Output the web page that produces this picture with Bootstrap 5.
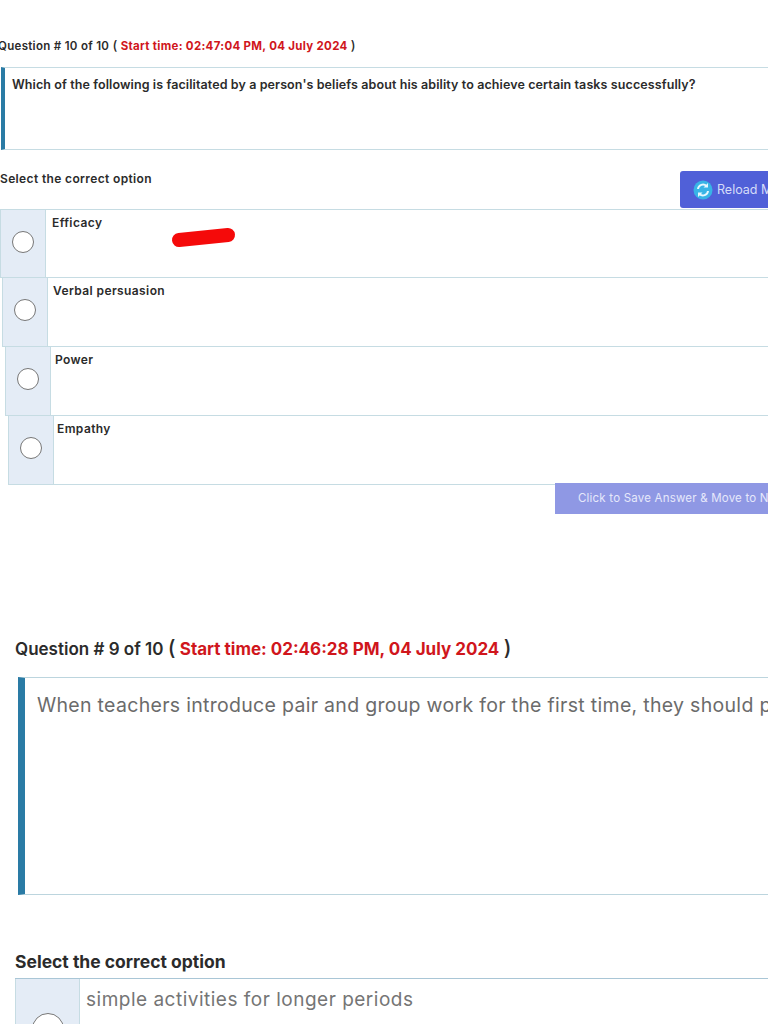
<!DOCTYPE html>
<html lang="en"><head><meta charset="utf-8"><title>Quiz</title>
<link rel="stylesheet" href="https://cdn.jsdelivr.net/npm/bootstrap@5.3.0/dist/css/bootstrap.min.css">
<style>
html,body{height:1024px;overflow:hidden;background:#fff}
body{font-family:Inter,"Open Sans",sans-serif;color:#2b2b2b;white-space:nowrap}
.qa{height:603px;padding-top:38px;position:relative}
.qa-head{font-size:11.500px;font-weight:600;height:29px;line-height:15px;margin-left:-2px;letter-spacing:.3px}
.paren{font-size:13px;font-weight:500}
.stime{color:#d0161c;font-weight:700}
.qa-box{height:83px;border:1px solid #c6dce3;border-left:4px solid #2a7ba5;border-right:0;padding:9px 7px;margin-left:1px;font-size:12.500px;font-weight:600;line-height:16px;letter-spacing:.1px}
.qa-bar{height:59px;padding-top:21px;align-items:flex-start;font-size:12px;font-weight:600;letter-spacing:.36px}
.qa-bar span{line-height:16px}
.reload{margin:0 -60px 0 auto;height:37px;width:148px;flex-shrink:0;background:#5060d8;color:#d5dcf8;border:0;border-radius:3px 0 0 3px;font-size:12.500px;padding:0 0 0 13px;letter-spacing:0}
.reload:hover{background:#5060d8;color:#d5dcf8}
.opt{height:69px;border-bottom:1px solid #c6dce3;font-size:12px;font-weight:600;letter-spacing:.4px}
.opt-first{border-top:1px solid #c6dce3}
.opt-side{width:46px;background:#e4ecf6;border-left:1px solid #c6dce3;border-right:1px solid #c6dce3}
.radio-dot{width:22px;height:22px;border:1.500px solid #777;border-radius:50%;background:#fff;margin-top:21px}
.opt-text{padding:5px 6px;line-height:15px}
.off2{margin-left:2px}.off2 .opt-text{padding-left:5px}
.off5{margin-left:5px}.off5 .opt-text{padding-left:4px}
.off8{margin-left:8px}.off8 .opt-text{padding-left:3px}
.save{margin:-2px -60px 0 auto;width:273px;height:31px;background:#8f98e4;color:#e6e8fb;border:0;border-radius:0;font-size:11.500px;text-align:left;padding:0 0 0 23px;letter-spacing:.2px}
.save:hover{background:#8f98e4;color:#e6e8fb}
.smear{position:absolute;left:171px;top:225px}
.qb-head{font-size:17px;font-weight:600;height:41px;line-height:24px;margin-left:15px;margin-top:33px}
.qb-head .paren{font-size:21px}
.qb-box{height:218px;margin-left:18px;border:1px solid #bcd5de;border-left:7px solid #2a7ba5;border-right:0;padding:14px 12px;font-size:19.500px;line-height:26px;color:#6b6b6b;letter-spacing:.3px}
.qb-bar{font-size:17.500px;font-weight:700;margin:55px 0 0 15px;height:28px;line-height:24px}
.qb-opt{margin-left:15px;border-top:1px solid #a9c6d6;height:80px;font-size:19px;color:#757575;letter-spacing:.5px}
.qb-side{width:65px;background:#e4ecf6;border-left:1px solid #c6dce3;border-right:1px solid #c6dce3}
.qb-dot{width:32px;height:32px;border:1.500px solid #777;border-radius:50%;background:#fff;margin-top:34px}
.qb-text{padding:7px 6px;line-height:27px}
</style></head><body>
<section class="qa">
  <div class="qa-head">Question # 10 of 10 <span class="paren">(</span> <span class="stime">Start time: 02:47:04 PM, 04 July 2024</span> <span class="paren">)</span></div>
  <div class="qa-box">Which of the following is facilitated by a person's beliefs about his ability to achieve certain tasks successfully?</div>
  <div class="d-flex qa-bar"><span>Select the correct option</span>
    <button class="btn reload d-flex align-items-center gap-1" type="button">
      <svg width="20" height="20" viewBox="0 0 20 20" aria-hidden="true"><circle cx="10" cy="10" r="9.500" fill="#38b4e6"/><path d="M5 9a5 5 0 0 1 8.500-3M15 11a5 5 0 0 1-8.500 3" fill="none" stroke="#e6f7ff" stroke-width="2"/><path d="M15 3v4.500h-4.500zM5 17v-4.500h4.500z" fill="#e6f7ff"/></svg>
      <span>Reload MCQ</span></button>
  </div>
  <div class="opt opt-first d-flex"><div class="opt-side d-flex justify-content-center"><div class="radio-dot"></div></div><div class="opt-text">Efficacy</div></div>
  <div class="opt d-flex off2"><div class="opt-side d-flex justify-content-center"><div class="radio-dot"></div></div><div class="opt-text">Verbal persuasion</div></div>
  <div class="opt d-flex off5"><div class="opt-side d-flex justify-content-center"><div class="radio-dot"></div></div><div class="opt-text">Power</div></div>
  <div class="opt d-flex off8"><div class="opt-side d-flex justify-content-center"><div class="radio-dot"></div></div><div class="opt-text">Empathy</div></div>
  <div class="d-flex"><button class="btn save" type="button">Click to Save Answer &amp; Move to Next</button></div>
  <svg class="smear" width="66" height="24" viewBox="0 0 66 24" aria-hidden="true"><path d="M8 15 L57 10" stroke="#f50a0a" stroke-width="14" stroke-linecap="round"/></svg>
</section>
<section>
  <div class="qb-head">Question # 9 of 10 <span class="paren">(</span> <span class="stime">Start time: 02:46:28 PM, 04 July 2024</span> <span class="paren">)</span></div>
  <div class="qb-box">When teachers introduce pair and group work for the first time, they should prepare</div>
  <div class="qb-bar">Select the correct option</div>
  <div class="qb-opt d-flex"><div class="qb-side d-flex justify-content-center"><div class="qb-dot"></div></div><div class="qb-text">simple activities for longer periods</div></div>
</section>
<script src="https://cdn.jsdelivr.net/npm/bootstrap@5.3.0/dist/js/bootstrap.bundle.min.js"></script>
</body></html>
